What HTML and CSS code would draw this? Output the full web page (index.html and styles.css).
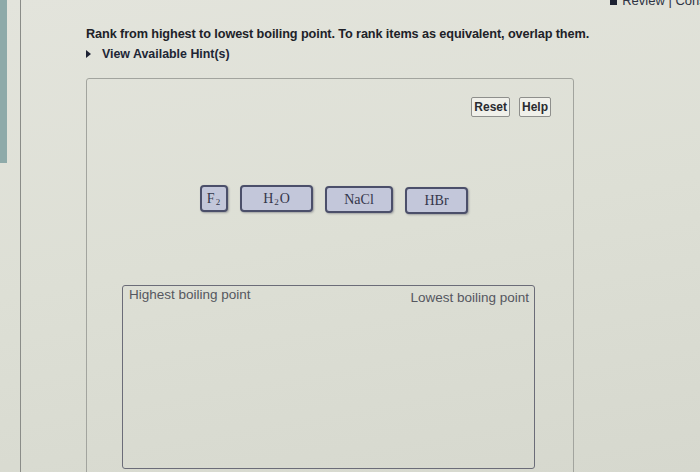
FILE: index.html
```html
<!DOCTYPE html>
<html>
<head>
<meta charset="utf-8">
<link rel="stylesheet" href="styles.css">
</head>
<body>
<div class="frame">
  <div class="strip"></div>
  <div class="rule"></div>
  <div class="main">
    <div class="topbar">
      <span class="review"><span class="sq"></span>Review | Constants</span>
    </div>
    <p class="instr">Rank from highest to lowest boiling point. To rank items as equivalent, overlap them.</p>
    <div class="hint"><span class="tri"></span>View Available Hint(s)</div>
    <div class="panel">
      <div class="tools">
        <button class="btn">Reset</button>
        <button class="btn">Help</button>
      </div>
      <div class="tiles">
        <div class="tile t-f2">F<span class="sub">2</span></div>
        <div class="tile t-h2o">H<span class="sub">2</span>O</div>
        <div class="tile t-nacl">NaCl</div>
        <div class="tile t-hbr">HBr</div>
      </div>
      <div class="drop">
        <span class="lbl">Highest boiling point</span>
        <span class="lbl lbl-r">Lowest boiling point</span>
      </div>
    </div>
  </div>
</div>
</body>
</html>
```

FILE: styles.css
```css
html, body {
  margin: 0;
  padding: 0;
}
body {
  width: 700px;
  height: 472px;
  overflow: hidden;
  background: linear-gradient(170deg, #e3e4dc 0%, #dddfd5 50%, #d6d8ce 100%);
  font-family: "Liberation Sans", Arial, sans-serif;
  color: #1c1c22;
}
.frame {
  display: flex;
  height: 472px;
  overflow: hidden;
}
.strip {
  width: 7px;
  height: 163px;
  background: #8eaaa9;
  flex: none;
}
.rule {
  width: 1px;
  margin-left: 13px;
  background: #8a8c88;
  flex: none;
}
.main {
  margin-left: 65px;
  width: 614px;
  flex: none;
}
.topbar {
  display: flex;
  justify-content: flex-end;
  height: 8px;
}
.review {
  display: flex;
  align-items: flex-end;
  margin-top: -7px;
  margin-right: -34px;
  font-size: 13px;
  color: #2e3444;
  line-height: 15px;
  height: 15px;
  white-space: nowrap;
}
.sq {
  width: 7px;
  height: 5px;
  background: #1d2233;
  margin-right: 5px;
  margin-bottom: 3px;
}
.instr {
  margin: 18px 0 0 0;
  font-size: 12.7px;
  font-weight: bold;
  line-height: 16px;
  color: #202128;
  letter-spacing: -0.1px;
}
.hint {
  margin-top: 4px;
  display: flex;
  align-items: center;
  font-size: 12.4px;
  font-weight: bold;
  line-height: 16px;
  color: #202535;
}
.tri {
  width: 0;
  height: 0;
  border-top: 4px solid transparent;
  border-bottom: 4px solid transparent;
  border-left: 5px solid #1d2233;
  margin-right: 11px;
}
.panel {
  margin-top: 16px;
  width: 488px;
  height: 420px;
  border: 1px solid #a2a49e;
  border-radius: 3px;
  box-sizing: border-box;
  padding: 18px 22px 0 35px;
}
.tools {
  display: flex;
  justify-content: flex-end;
  gap: 9px;
}
.btn {
  font-family: "Liberation Sans", Arial, sans-serif;
  font-size: 12px;
  font-weight: bold;
  color: #2a2b30;
  background: #f0f0ea;
  border: 1px solid #8e8f8c;
  border-radius: 2px;
  padding: 2px 2px;
  line-height: 14px;
}
.tiles {
  display: flex;
  gap: 12px;
  margin-top: 68px;
  margin-left: 78px;
}
.tile {
  height: 27px;
  box-sizing: border-box;
  border: 2px solid #4b4f6a;
  border-radius: 4px;
  background: #c3c7da;
  box-shadow: 1px 1px 2px rgba(40, 40, 60, 0.35);
  display: flex;
  align-items: center;
  justify-content: center;
  font-family: "Liberation Serif", "Times New Roman", serif;
  font-size: 14px;
  color: #34364a;
}
.sub {
  font-size: 9px;
  position: relative;
  top: 3px;
  margin: 0 1px;
}
.t-f2 { width: 28px; }
.t-h2o { width: 73px; }
.t-nacl { width: 68px; margin-top: 1px; }
.t-hbr { width: 63px; margin-top: 2px; }
.drop {
  margin-top: 71px;
  width: 413px;
  height: 184px;
  box-sizing: border-box;
  border: 1.5px solid #6b6c78;
  border-radius: 3px;
  display: flex;
  justify-content: space-between;
  padding: 1px 5px 0 6px;
}
.lbl {
  font-size: 13.5px;
  color: #55575f;
  line-height: 15px;
}
.lbl-r {
  margin-top: 3px;
}
```
